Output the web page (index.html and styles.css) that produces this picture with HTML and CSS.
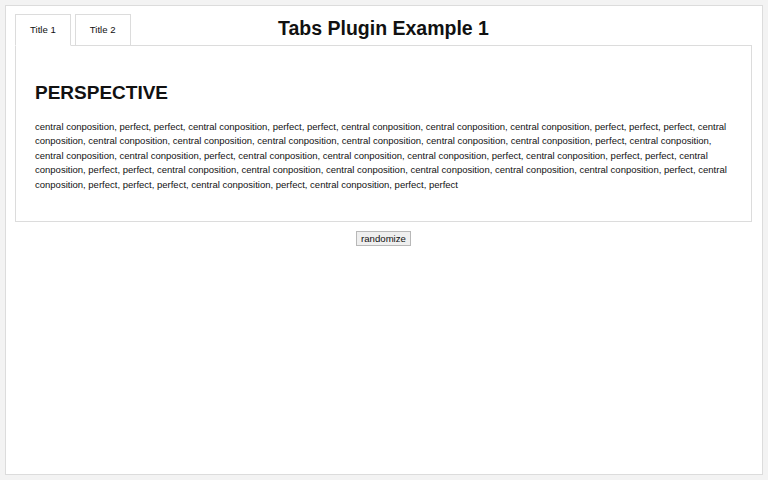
FILE: index.html
```html
<!DOCTYPE html>
<html lang="en">
<head>
  <meta charset="UTF-8">
  <meta name="viewport" content="width=device-width, initial-scale=1.0">
  <title>Tabs Plugin Example 1</title>
  <link rel="stylesheet" href="styles.css">
</head>
<body>

  <div class="page">
    <div class="tabs-head">
      <ul class="tab-list">
        <li class="tab active">Title 1</li>
        <li class="tab">Title 2</li>
      </ul>
      <h1 class="page-title">Tabs Plugin Example 1</h1>
    </div>

    <div class="tab-panel">
      <h2 class="panel-title">PERSPECTIVE</h2>
      <p class="panel-text">central conposition, perfect, perfect, central conposition, perfect, perfect, central conposition, central conposition, central conposition, perfect, perfect, perfect, central conposition, central conposition, central conposition, central conposition, central conposition, central conposition, central conposition, perfect, central conposition, central conposition, central conposition, perfect, central conposition, central conposition, central conposition, perfect, central conposition, perfect, perfect, central conposition, perfect, perfect, central conposition, central conposition, central conposition, central conposition, central conposition, central conposition, perfect, central conposition, perfect, perfect, perfect, central conposition, perfect, central conposition, perfect, perfect</p>
    </div>

    <div class="actions">
      <button class="btn-random">randomize</button>
    </div>
  </div>

</body>
</html>
```

FILE: styles.css
```css
html, body {
  margin: 0;
  padding: 0;
}

body {
  background-color: #f3f3f3;
  font-family: "Liberation Sans", Arial, sans-serif;
  color: #111;
  padding: 5px;
  height: 100vh;
  box-sizing: border-box;
}

.page {
  height: 100%;
  box-sizing: border-box;
  background-color: #fff;
  border: 1px solid #dcdcdc;
  padding: 8px 10px 0 9px;
}

/* tab strip on the left, title centered over the whole page */
.tabs-head {
  display: grid;
  grid-template-columns: 1fr auto 1fr;
  align-items: end;
}

.tab-list {
  display: flex;
  gap: 4px;
  list-style: none;
  margin: 0;
  padding: 0;
  margin-bottom: -1px;
  position: relative;
  z-index: 1;
}

.tab {
  font-size: 9.6px;
  line-height: 30px;
  padding: 0 14px;
  border: 1px solid #dcdcdc;
  background-color: #fff;
  cursor: pointer;
}

.tab.active {
  border-bottom-color: #fff;
}

.page-title {
  grid-column: 2;
  align-self: start;
  margin: 0;
  padding-top: 3px;
  font-size: 19.5px;
  line-height: 23px;
  font-weight: bold;
  text-align: center;
}

.tab-panel {
  border: 1px solid #dcdcdc;
  padding: 36px 19px 29px;
}

.panel-title {
  margin: 0 0 16px;
  font-size: 19px;
  line-height: 22px;
  font-weight: bold;
}

.panel-text {
  margin: 0;
  font-size: 9.5px;
  line-height: 14.4px;
}

.actions {
  display: flex;
  justify-content: center;
  padding-top: 9px;
}

.btn-random {
  font-family: "Liberation Sans", Arial, sans-serif;
  font-size: 9.6px;
  height: 15px;
  line-height: 13px;
  padding: 0 4px;
  background-color: #efefef;
  border: 1px solid #b8b8b8;
  border-radius: 0;
  color: #111;
}
```
